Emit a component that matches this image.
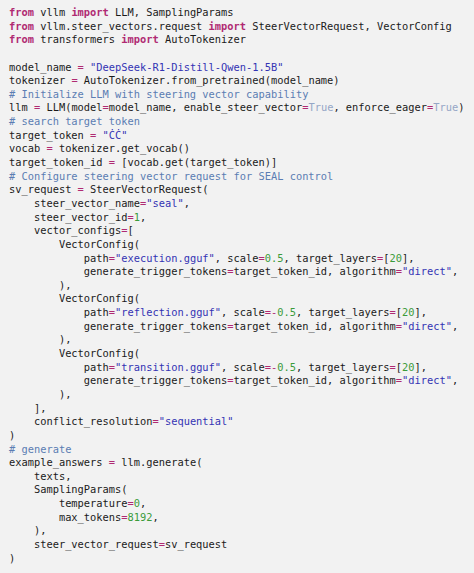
const code = `from vllm import LLM, SamplingParams
from vllm.steer_vectors.request import SteerVectorRequest, VectorConfig
from transformers import AutoTokenizer

model_name = "DeepSeek-R1-Distill-Qwen-1.5B"
tokenizer = AutoTokenizer.from_pretrained(model_name)
# Initialize LLM with steering vector capability
llm = LLM(model=model_name, enable_steer_vector=True, enforce_eager=True)
# search target token
target_token = "ĊĊ"
vocab = tokenizer.get_vocab()
target_token_id = [vocab.get(target_token)]
# Configure steering vector request for SEAL control
sv_request = SteerVectorRequest(
    steer_vector_name="seal",
    steer_vector_id=1,
    vector_configs=[
        VectorConfig(
            path="execution.gguf", scale=0.5, target_layers=[20],
            generate_trigger_tokens=target_token_id, algorithm="direct",
        ),
        VectorConfig(
            path="reflection.gguf", scale=-0.5, target_layers=[20],
            generate_trigger_tokens=target_token_id, algorithm="direct",
        ),
        VectorConfig(
            path="transition.gguf", scale=-0.5, target_layers=[20],
            generate_trigger_tokens=target_token_id, algorithm="direct",
        ),
    ],
    conflict_resolution="sequential"
)
# generate
example_answers = llm.generate(
    texts,
    SamplingParams(
        temperature=0,
        max_tokens=8192,
    ),
    steer_vector_request=sv_request
)`;

const tokenRe = /(#.*$)|("[^"]*")|\b(from|import)\b|\b(True)\b|\b(\d+(?:\.\d+)?)\b|([=-])/g;

function highlight(line) {
  const out = [];
  let last = 0;
  let m;
  tokenRe.lastIndex = 0;
  while ((m = tokenRe.exec(line))) {
    if (m.index > last) out.push(<span key={last}>{line.slice(last, m.index)}</span>);
    let cls = "";
    if (m[1]) cls = "text-[#5b7db3]";
    else if (m[2]) cls = "text-[#3434b4]";
    else if (m[3]) cls = "text-[#b02a72] font-bold";
    else if (m[4]) cls = "text-[#95a6c6]";
    else if (m[5]) cls = "text-[#3b9b3b]";
    else if (m[6]) cls = "text-[#b02a72]";
    out.push(
      <span key={m.index} className={cls}>
        {m[0]}
      </span>
    );
    last = m.index + m[0].length;
  }
  if (last < line.length) out.push(<span key={last}>{line.slice(last)}</span>);
  return out;
}

export default function App() {
  const lines = code.split("\n");
  return (
    <div className="w-[474px] h-[573px] bg-[#f2f2f2] overflow-hidden">
      <pre className="pl-[9px] pt-[6px] text-[10.37px] leading-[13.65px] text-[#1a1a1a] font-['DejaVu_Sans_Mono',monospace]">
        {lines.map((l, i) => (
          <div key={i} className="h-[13.65px] whitespace-pre">
            {l ? highlight(l) : " "}
          </div>
        ))}
      </pre>
    </div>
  );
}
